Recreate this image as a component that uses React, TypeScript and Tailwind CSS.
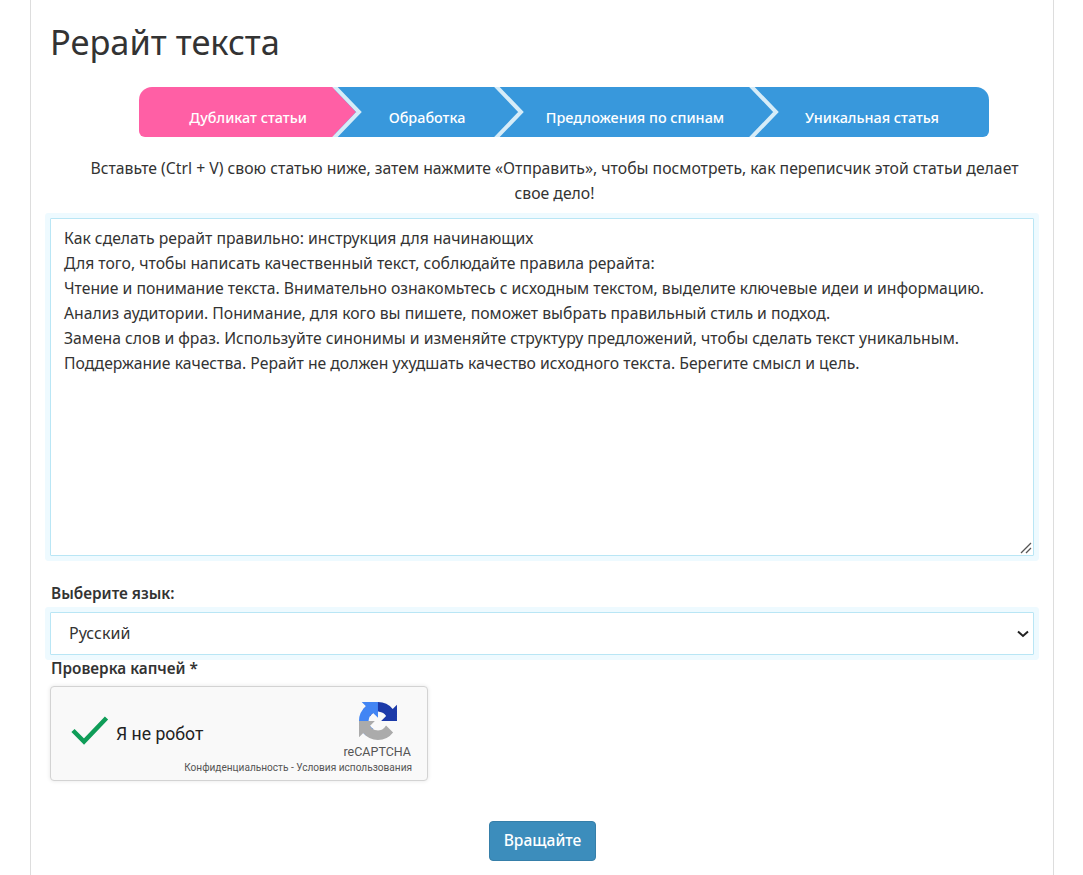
const text = `Как сделать рерайт правильно: инструкция для начинающих
Для того, чтобы написать качественный текст, соблюдайте правила рерайта:
Чтение и понимание текста. Внимательно ознакомьтесь с исходным текстом, выделите ключевые идеи и информацию.
Анализ аудитории. Понимание, для кого вы пишете, поможет выбрать правильный стиль и подход.
Замена слов и фраз. Используйте синонимы и изменяйте структуру предложений, чтобы сделать текст уникальным.
Поддержание качества. Рерайт не должен ухудшать качество исходного текста. Берегите смысл и цель.`;

function Arrow({ fill }: { fill: string }) {
  return (
    <svg width="32" height="50" viewBox="0 0 32 50" className="absolute left-full top-0 z-10 -ml-[3px]">
      <polygon points="0,0 24,25 0,50" fill={fill} />
      <polyline points="1,-2 27,25 1,52" fill="none" stroke="#d6ecf8" strokeWidth="4" />
    </svg>
  );
}

function Step({ label, className, arrow, pad }: { label: string; className: string; arrow?: string; pad: string }) {
  return (
    <div className={`relative flex h-[50px] items-center justify-center pt-[12px] text-[14.4px] font-medium text-white ${className} ${pad}`}>
      {label}
      {arrow && <Arrow fill={arrow} />}
    </div>
  );
}

const LOGO_ARROW =
  "M64 32c-.01-.46-.02-.92-.04-1.38V4.54l-7.17 7.17A31.96 31.96 0 0 0 32 0 31.96 31.96 0 0 0 6.6 12.55l11.87 11.87a15.58 15.58 0 0 1 4.77-5.35c2.05-1.6 4.95-2.91 9.29-2.91.52 0 .93.06 1.22.17a15.5 15.5 0 0 1 11.9 7.35l-8.32 8.31c10.53-.04 22.43-.06 26.8.01z";

function RecaptchaLogo() {
  return (
    <svg width="38" height="38" viewBox="0 0 64 64" className="block">
      <path fill="#1c3aa9" d={LOGO_ARROW} />
      <path fill="#4285f4" d={LOGO_ARROW} transform="rotate(-90 32 32)" />
      <path fill="#ababab" d={LOGO_ARROW} transform="rotate(180 32 32)" />
    </svg>
  );
}

export default function App() {
  return (
    <div className="h-[875px] overflow-hidden bg-white font-['Noto_Sans','Open_Sans',sans-serif] text-[#333]">
      <div className="ml-[30px] h-[875px] w-[1024px] border-x border-[#ddd] px-[19px]">
        <h1 className="pt-[17px] text-[34.4px] leading-[50px] text-[#333]">Рерайт текста</h1>

        <div className="ml-[89px] mt-[20px] flex w-[850px]">
          <Step label="Дубликат статьи" className="z-40 w-[196px] rounded-tl-[13px] rounded-bl-[6px] bg-[#ff5fa5]" arrow="#ff5fa5" pad="pl-[22px]" />
          <Step label="Обработка" className="z-30 w-[162px] bg-[#3898dc]" arrow="#3898dc" pad="pl-[22px]" />
          <Step label="Предложения по спинам" className="z-20 w-[255px] bg-[#3898dc]" arrow="#3898dc" pad="pl-[21px]" />
          <Step label="Уникальная статья" className="z-10 w-[237px] rounded-tr-[13px] rounded-br-[6px] bg-[#3898dc]" pad="pl-[3px]" />
        </div>

        <p className="mt-[19px] pl-[25px] text-center text-[15.77px] leading-[25px]">
          Вставьте (Ctrl + V) свою статью ниже, затем нажмите «Отправить», чтобы посмотреть, как переписчик этой статьи делает свое дело!
        </p>

        <div className="relative mt-[12px] h-[338px] w-[984px]">
          <textarea
            readOnly
            defaultValue={text}
            className="block h-[338px] w-[984px] resize-none rounded-[1px] border border-[#b9e6f5] bg-white px-[13px] py-[7px] text-[15.74px] leading-[25px] text-[#333] shadow-[0_0_0_5px_#eefaff] outline-none"
          />
          <svg width="12" height="12" viewBox="0 0 12 12" className="pointer-events-none absolute bottom-[2px] right-[2px]">
            <path d="M1 11 L11 1 M6 11 L11 6" stroke="#555" strokeWidth="1.3" fill="none" />
          </svg>
        </div>

        <label className="mt-[26px] block pl-[1px] text-[15.4px] font-semibold leading-6">Выберите язык:</label>
        <div className="relative mt-[6px] h-[43px] w-[984px]">
          <select className="block h-[43px] w-[984px] appearance-none rounded-[1px] border border-[#b9e6f5] bg-white px-[18px] pb-[2px] text-[16px] text-[#333] shadow-[0_0_0_5px_#eefaff] outline-none">
            <option>Русский</option>
          </select>
          <svg width="12" height="8" viewBox="0 0 12 8" className="pointer-events-none absolute right-[5px] top-[18px]">
            <path d="M1 1.5 L6 6 L11 1.5" stroke="#222" strokeWidth="2" fill="none" />
          </svg>
        </div>

        <label className="mt-[1px] block pl-[1px] text-[15.3px] font-semibold leading-6">Проверка капчей *</label>

        <div className="mt-[6px] flex h-[95px] w-[378px] rounded-[4px] border border-[#d3d3d3] bg-[#f9f9f9] font-['Roboto',sans-serif] shadow-[0_0_4px_rgba(0,0,0,0.1)]">
          <div className="flex min-w-0 flex-1 items-center">
            <svg width="38" height="34" viewBox="0 0 38 34" className="ml-[20px] mb-[2px] shrink-0">
              <path d="M2 14.5 L13 25.5 L35.5 2" fill="none" stroke="#0f9d58" strokeWidth="4.5" />
            </svg>
            <span className="ml-[7px] mt-[2px] whitespace-nowrap text-[17.6px] text-[#222]">Я не робот</span>
          </div>
          <div className="flex shrink-0 flex-col items-end pr-[15px] pt-[15px]">
            <div className="mr-[15px]"><RecaptchaLogo /></div>
            <div className="mr-[1px] mt-[5px] text-[12.5px] leading-[14px] text-[#555]">reCAPTCHA</div>
            <div className="mt-[3px] whitespace-nowrap text-[10.1px] leading-[12px] text-[#555]">Конфиденциальность - Условия использования</div>
          </div>
        </div>

        <div className="mt-[40px] flex justify-center pl-[1px]">
          <button className="h-[40px] w-[107px] rounded-[4px] border border-[#367fa9] bg-[#3c8dbc] text-[15.6px] font-medium text-white">Вращайте</button>
        </div>
      </div>
    </div>
  );
}
